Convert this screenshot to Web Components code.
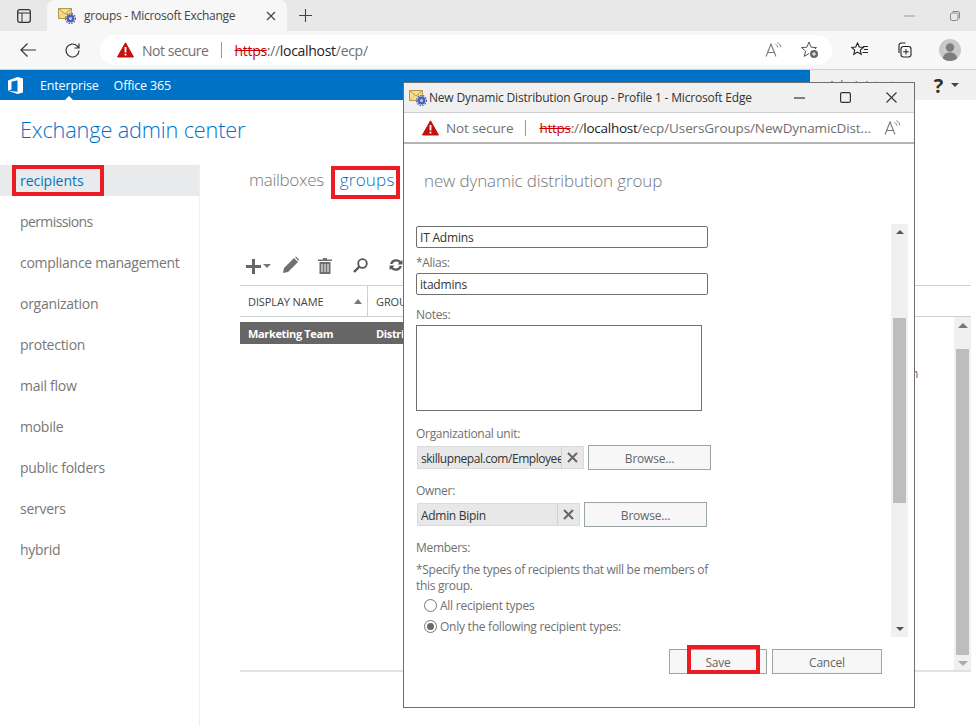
<!DOCTYPE html>
<html lang="en"><head><meta charset="utf-8"><title>groups - Microsoft Exchange</title>
<style>
html,body{margin:0;padding:0;background:#fff}
body{width:976px;height:726px;overflow:hidden;position:relative;font-family:"Open Sans","Noto Sans",sans-serif;color:#666}
</style></head><body>
<browser-bar></browser-bar>
<ex-topbar></ex-topbar>
<admin-page></admin-page>
<popup-window></popup-window>
<script>
const ICONS={
 mail:'<svg viewBox="0 0 18 17" width="18" height="17"><path d="M.5 1.500h13v10H.5z" fill="#f8dd8c" stroke="#b4964c"/><path d="M.5 1.500 7 7l6.500-5.500" fill="none" stroke="#b4964c"/><path d="M.5 11.500 5 6.500M13.500 11.500 9 6.500" fill="none" stroke="#d8bd70"/><circle cx="12.500" cy="11.500" r="4" fill="#4a5fc0"/><circle cx="12.500" cy="11.500" r="5" fill="none" stroke="#4a5fc0" stroke-width="1.200" stroke-dasharray="1.500 1.200"/><circle cx="12.500" cy="11.500" r="1.500" fill="#c5cff2"/></svg>',
 warn:'<svg viewBox="0 0 17 16" width="17" height="16"><path d="M8.500.8 16.500 15H.5z" fill="#c50f0f" stroke="#c50f0f" stroke-linejoin="round"/><path d="M7.600 5h1.800v5.500H7.600zM7.600 11.800h1.800v1.800H7.600z" fill="#fff"/></svg>',
 read:'<svg viewBox="0 0 17 16" width="17" height="16"><path d="M1 14.500 6 2l5 12.500M2.800 10.500h6.400" fill="none" stroke="#777" stroke-width="1.100"/><path d="M10.500 2.500c1.300.5 2 1.500 2.200 3M12.500.8c2 .8 3 2.300 3.200 4.400" fill="none" stroke="#777"/></svg>'
};
function def(name,css,html,init){
 customElements.define(name,class extends HTMLElement{
  constructor(){super();const r=this.attachShadow({mode:'open'});r.innerHTML='<style>'+css+'</style>'+html;if(init)init(this,r)}
 });
}

def('browser-bar',`
:host{display:block;height:70px;font-family:"Open Sans","Noto Sans",sans-serif}
.strip{height:31px;background:#e8e8e8;display:flex;align-items:stretch}
.side{width:47px;display:flex;align-items:center;justify-content:center}
.tab{width:240px;background:#f7f7f7;border-radius:8px 8px 0 0;display:flex;align-items:center;padding:0 11px 0 11px;box-sizing:border-box;font-size:12px;letter-spacing:-.27px;color:#444}
.tab span{flex:1;margin-left:8px;white-space:nowrap}
.plus{width:36px;display:flex;align-items:center;justify-content:center}
.ctrl{margin-left:auto;display:flex;align-items:center;gap:35px;padding-right:16px}
.tools{height:38px;background:#f7f7f7;border-bottom:1px solid #cfcfcf;display:flex;align-items:center;position:relative}
.nav{width:100px;display:flex;align-items:center;gap:27px;padding-left:19px;box-sizing:border-box}
.pill{width:732px;height:30px;background:#fff;border-radius:15px;display:flex;align-items:center;box-sizing:border-box;padding-left:17px;font-size:14px;letter-spacing:-.3px;white-space:nowrap}
.ns{margin-left:8px;color:#707070;letter-spacing:-.45px}
.sep{width:1px;height:16px;background:#999;margin:0 13px 0 12px}
.red{color:#c00;text-decoration:line-through}
.g{color:#707070}.d{color:#222}
.end{margin-left:auto;display:flex;gap:19px;align-items:center;padding-right:13px}
.right{display:flex;align-items:center;margin-left:19px;gap:29px}
.av{width:22px;height:22px;border-radius:50%;background:#c9c9c9;overflow:hidden;display:block;margin-left:-2px}
`,`
<div class="strip">
 <div class="side"><svg width="14" height="14" viewBox="0 0 14 14"><rect x=".7" y=".7" width="12.600" height="12.600" rx="2" fill="none" stroke="#333" stroke-width="1.300"/><path d="M.7 4h12.600M5 4v9" stroke="#333" fill="none"/></svg></div>
 <div class="tab">${ICONS.mail}<span>groups - Microsoft Exchange</span><svg width="10" height="10" viewBox="0 0 10 10"><path d="M1 1l8 8M9 1l-8 8" stroke="#444" stroke-width="1.200"/></svg></div>
 <div class="plus"><svg width="15" height="15" viewBox="0 0 15 15"><path d="M7.500 1v13M1 7.500h13" stroke="#444" stroke-width="1.100"/></svg></div>
 <div class="ctrl"><svg width="11" height="2" viewBox="0 0 11 2"><path d="M0 1h11" stroke="#9a9a9a"/></svg><svg width="10" height="10" viewBox="0 0 10 10"><rect x=".5" y="2" width="7.500" height="7.500" rx="1.500" fill="none" stroke="#8a8a8a"/><path d="M2.500.5h5.500a1.500 1.500 0 0 1 1.500 1.500v5.500" fill="none" stroke="#8a8a8a"/></svg></div>
</div>
<div class="tools">
 <div class="nav">
  <svg width="18" height="16" viewBox="0 0 18 16"><path d="M17 8H2M8.500 1.500 2 8l6.500 6.500" fill="none" stroke="#333" stroke-width="1.200"/></svg>
  <svg width="17" height="17" viewBox="0 0 17 17"><path d="M15 8.500a6.500 6.500 0 1 1-2-4.700L15 6M15 1.500V6h-4.500" fill="none" stroke="#333" stroke-width="1.200"/></svg>
 </div>
 <div class="pill">${ICONS.warn}<span class="ns">Not secure</span><span class="sep"></span><span><span class="red">https</span><span class="g">://</span><span class="d">localhost</span><span class="g">/ecp/</span></span>
  <div class="end">${ICONS.read}<svg width="18" height="18" viewBox="0 0 18 18"><path d="M8 1 10.100 6.200l5.400.4-4.100 3.500 1.300 5.300L8 12.500 3.300 15.400l1.300-5.300L.5 6.600l5.400-.4z" fill="none" stroke="#555" stroke-linejoin="round"/><circle cx="13" cy="13" r="5" fill="#fff"/><circle cx="13" cy="13" r="4" fill="#666"/><path d="M13 11v4M11 13h4" stroke="#fff"/></svg></div>
 </div>
 <div class="right">
  <svg width="18" height="16" viewBox="0 0 18 16"><path d="M6.500 1 8.300 5l4 .4-3 2.700.9 4.200-3.700-2.200L2.800 12.300l.9-4.200-3-2.700 4-.4z" fill="none" stroke="#222" stroke-width="1.100"/><path d="M12 4.500h5M13 7.500h4M11.500 10.500h5.500" stroke="#222"/></svg>
  <svg width="16" height="16" viewBox="0 0 16 16" style="margin-left:-2px"><path d="M3 11V3.500Q3 1 5.500 1h4" fill="none" stroke="#222" stroke-width="1.100"/><rect x="5" y="4.500" width="10" height="10.500" rx="2.500" fill="none" stroke="#222" stroke-width="1.100"/><path d="M10 7v5.500M7.200 9.800h5.600" stroke="#222"/></svg>
  <svg class="av" viewBox="0 0 22 22"><circle cx="11" cy="8.500" r="4.200" fill="#7d7d7d"/><path d="M3.500 22c0-6 3-8.500 7.500-8.500s7.500 2.500 7.500 8.500z" fill="#7d7d7d"/></svg>
 </div>
</div>`);

def('ex-topbar',`
:host{display:flex;height:30px;background:#0072c6;font-family:"Open Sans","Noto Sans",sans-serif;font-size:12.500px;color:#fff;letter-spacing:-.15px;white-space:nowrap}
.blue{width:810px;display:flex;align-items:center;box-sizing:border-box;padding-left:8px;position:relative}
.logo{display:block;margin-right:17px}
.t2{margin-left:15px}
.notch{position:absolute;left:65px;bottom:0;width:0;height:0;border:4px solid transparent;border-top:0;border-bottom-color:#fff}
.grey{flex:1;background:#f0f0f0;color:#666;display:flex;align-items:center;box-sizing:border-box;padding-left:18px}
.help{margin-left:27px;font-size:20px;font-weight:700;color:#333;letter-spacing:0}
.car{margin-left:8px;width:0;height:0;border:4px solid transparent;border-top-color:#444;border-bottom:0}
`,`
<div class="blue"><svg class="logo" width="15" height="17" viewBox="0 0 15 17"><path d="M0 3.500 9.500 0 15 1.500v14L9.500 17 0 13.700 9.500 14.800V3.300L3.500 4.800v7.700L0 13.700z" fill="#fff"/></svg><span>Enterprise</span><span class="t2">Office 365</span><i class="notch"></i></div>
<div class="grey"><span>Administrator</span><span class="help">?</span><i class="car"></i></div>`);

def('red-box',`:host{position:absolute;box-sizing:border-box;border:4px solid #ed1c24;pointer-events:none}`,'');

def('nav-item',`
:host{display:block;position:relative;height:31px;margin-bottom:10px;padding-left:20px;line-height:32px;font-size:14px;letter-spacing:-.27px;color:#777;box-sizing:border-box;white-space:nowrap}
:host([sel]){background:#e9eaeb;color:#0072c6;letter-spacing:-.05px}
`,`<slot></slot>`);

def('tool-bar',`
:host{display:flex;align-items:center;height:30px;padding:0 0 10px 6px;box-sizing:border-box}
svg{display:block}
.car{width:0;height:0;border:4px solid transparent;border-top-color:#777;border-bottom:0;margin:2px 0 0 2px}
`,`
<svg width="15" height="15" viewBox="0 0 15 15" style="margin-top:3px"><path d="M6 0h3v6h6v3H9v6H6V9H0V6h6z" fill="#666"/></svg><i class="car"></i>
<svg width="18" height="18" viewBox="0 0 18 18" style="margin-left:11px"><path d="M1 17l1-5L12 2l4 4L6 16zM13 1l1-.5 3 3-.5 1.500z" fill="#707070"/></svg>
<svg width="14" height="16" viewBox="0 0 14 16" style="margin-left:18px;margin-top:2px"><path d="M5 0h4v1.500h5V3H0V1.500h5zM1.500 4h11v12h-11z" fill="#707070"/><path d="M4 6v8M7 6v8M10 6v8" stroke="#fff"/></svg>
<svg width="15" height="15" viewBox="0 0 15 15" style="margin-left:21px"><circle cx="9.500" cy="5.500" r="4.300" fill="none" stroke="#555" stroke-width="1.800"/><path d="M6.500 8.500 1 14" stroke="#555" stroke-width="2.400"/></svg>
<svg width="16" height="16" viewBox="0 0 15 15" style="margin-left:20px"><path d="M2 6.500A5.800 5.800 0 0 1 12 4l1.500-1.500V7H9l1.500-1.500A3.700 3.700 0 0 0 4.200 6.500zM13 8.500A5.800 5.800 0 0 1 3 11l-1.500 1.500V8H6l-1.500 1.500a3.700 3.700 0 0 0 6.300-1z" fill="#555"/></svg>`);

def('admin-page',`
:host{display:block;font-family:"Open Sans","Noto Sans",sans-serif}
.title{height:65px;box-sizing:border-box;padding:16px 0 0 20px;font-size:21.700px;line-height:28px;color:#0072c6;letter-spacing:-.15px;font-weight:300;white-space:nowrap}
.cols{display:flex;height:561px}
.side{width:200px;border-right:1px solid #eef0f0;box-sizing:border-box;position:relative;height:561px}
.main{flex:1;margin:0 5px 0 40px;min-width:0}
.tabs{height:90px;display:flex;gap:16px;padding:3px 0 0 9px;box-sizing:border-box;font-size:17px;line-height:24px;letter-spacing:-.3px;color:#777;font-weight:300;white-space:nowrap;position:relative}
.tabs b{font-weight:300;color:#0072c6;letter-spacing:.2px}
.head{height:32px;box-sizing:border-box;border-top:1px solid #ccd1d1;border-bottom:1px solid #ccd1d1;display:flex;align-items:center;font-size:11px;letter-spacing:-.1px;color:#444;white-space:nowrap}
.h1{width:128px;height:100%;padding-left:8px;box-sizing:border-box;border-right:1px solid #ccd1d1;display:flex;align-items:center;justify-content:space-between;padding-right:5px}
.up{width:0;height:0;border:4px solid transparent;border-bottom:5px solid #777;border-top:0}
.h2{margin-left:8px}
.body{height:355px;display:flex;border-bottom:2px solid #dfe3e3;box-sizing:border-box}
.list{width:560px;padding-top:5px;box-sizing:border-box}
.row{height:22px;background:#666;color:#fff;font-size:11px;font-weight:700;letter-spacing:-.35px;display:flex;align-items:center;white-space:nowrap}
.row span:first-child{width:136px;padding-left:8px;box-sizing:border-box}
.detail{flex:1;display:flex;justify-content:space-between;min-width:0}
.txt{font-size:12px;color:#666;padding:48px 0 0 111px}
.sb{width:17px;background:#f0f0f0;display:flex;flex-direction:column;align-items:center;height:353px}
.ua{width:0;height:0;border:5px solid transparent;border-bottom:5px solid #777;border-top:0;margin:6px 0 0}
.th{width:13px;height:306px;background:#bdbdbd;margin-top:21px}
.da{width:0;height:0;border:5px solid transparent;border-top:5px solid #aaa;border-bottom:0;margin-top:6px}
`,`
<div class="title">Exchange admin center</div>
<div class="cols">
 <div class="side">
  <nav-item sel>recipients</nav-item><nav-item style="letter-spacing:-.6px">permissions</nav-item><nav-item>compliance management</nav-item><nav-item>organization</nav-item><nav-item>protection</nav-item><nav-item>mail flow</nav-item><nav-item>mobile</nav-item><nav-item>public folders</nav-item><nav-item>servers</nav-item><nav-item>hybrid</nav-item>
  <red-box style="left:12px;top:0;width:92px;height:31px"></red-box>
 </div>
 <div class="main">
  <div class="tabs"><span>mailboxes</span><b>groups</b><red-box style="left:91px;top:1px;width:69px;height:33px"></red-box></div>
  <tool-bar></tool-bar>
  <div class="head"><div class="h1"><span>DISPLAY NAME</span><i class="up"></i></div><div class="h2">GROU</div></div>
  <div class="body">
   <div class="list"><div class="row"><span>Marketing Team</span><span>Distri</span></div></div>
   <div class="detail"><div class="txt">n</div><div class="sb"><i class="ua"></i><i class="th"></i><i class="da"></i></div></div>
  </div>
 </div>
</div>`);

def('form-field',`
:host{display:block}
.l{display:block;font-size:12px;line-height:16px;color:#707070;letter-spacing:-.3px;white-space:nowrap}
`,`<span class="l"><slot></slot></span>`);

def('text-box',`
:host{display:block;box-sizing:border-box;width:292px;height:22px;border:1px solid #707070;border-radius:2px;padding:2px 0 0 3px;font-size:12px;line-height:18px;color:#333;letter-spacing:-.2px;background:#fff;white-space:nowrap}
`,`<slot></slot>`);

def('picker-row',`
:host{display:flex;align-items:center;height:25px;margin-left:1px;font-size:12px;letter-spacing:-.3px}
.box{height:23px;box-sizing:border-box;background:#e8e8e8;border:1px solid #dadcdc;display:flex;color:#333;align-items:center;overflow:hidden}
.v{flex:1;padding:2px 0 0 3px;white-space:nowrap;overflow:hidden;min-width:0}
.x{width:21px;height:100%;border-left:1px solid #cfd2d2;display:flex;align-items:center;justify-content:center;flex:none}
.b{margin-left:4px;width:123px;height:25px;box-sizing:border-box;border:1px solid #9aa5a5;background:#f7f7f7;color:#666;display:flex;align-items:center;justify-content:center;padding-top:1px;letter-spacing:-.2px}
`,`<div class="box"><div class="v"><slot></slot></div><div class="x"><svg width="11" height="11" viewBox="0 0 11 11"><path d="M1 1l9 9M10 1l-9 9" stroke="#666" stroke-width="2"/></svg></div></div><div class="b">Browse...</div>`);

def('radio-line',`
:host{display:flex;align-items:center;height:16px;padding-left:8px;font-size:12px;color:#707070;letter-spacing:-.25px;white-space:nowrap}
.r{width:13px;height:13px;border:1px solid #777;border-radius:50%;box-sizing:border-box;margin-right:3px;display:flex;align-items:center;justify-content:center;background:#fff;flex:none}
:host([on]) .r::after{content:"";width:7px;height:7px;border-radius:50%;background:#6a6a6a}
`,`<i class="r"></i><slot></slot>`);

def('popup-window',`
:host{position:absolute;left:403px;top:82px;width:512px;height:626px;box-sizing:border-box;border:1px solid #6f6f6f;background:#fff;font-family:"Open Sans","Noto Sans",sans-serif;display:flex;flex-direction:column}
.tb{height:30px;background:#f0f0f0;border-bottom:1px solid #cfcfcf;box-sizing:border-box;display:flex;align-items:center;padding-left:5px;font-size:12px;letter-spacing:-.2px;color:#333;white-space:nowrap;flex:none}
.tb span{margin-left:2px;flex:1}
.wc{display:flex;align-items:center;gap:35px;padding-right:17px}
.ab{height:31px;border-bottom:2px solid #b4b4b4;box-sizing:border-box;display:flex;align-items:center;padding-left:18px;font-size:13.500px;letter-spacing:-.27px;white-space:nowrap;flex:none;overflow:hidden}
.ns{margin-left:7px;color:#707070;letter-spacing:-.1px}
.sep{width:1px;height:16px;background:#999;margin:0 13px 0 12px;flex:none}
.red{color:#c00;text-decoration:line-through}.g{color:#707070}.d{color:#222}
.url{flex:none}
.url .w{letter-spacing:-.12px}
.ab svg{margin-left:13px;flex:none}
.ab svg:first-child{margin-left:0}
h1{margin:0;height:80px;box-sizing:border-box;padding:25px 0 0 20px;font-weight:300;font-size:17px;line-height:24px;letter-spacing:-.13px;color:#777;flex:none;white-space:nowrap}
.scroll{height:413px;display:flex;justify-content:space-between;flex:none;padding-left:12px;box-sizing:border-box;padding-right:6px}
.form{width:300px;padding-top:2px;box-sizing:border-box;overflow:hidden}
.ta{display:block;box-sizing:border-box;width:286px;height:86px;border:1px solid #707070;margin-top:2px}
.sb{width:17px;background:#f0f0f0;display:flex;flex-direction:column;align-items:center}
.ua{width:0;height:0;border:4px solid transparent;border-bottom:4px solid #555;border-top:0;margin-top:6px}
.th{width:13px;height:185px;background:#bdbdbd;margin-top:84px}
.da{width:0;height:0;border:4px solid transparent;border-top:4px solid #555;border-bottom:0;margin-top:auto;margin-bottom:6px}
.btns{flex:none;display:flex;justify-content:flex-end;gap:5px;margin-top:12px;padding-right:32px;font-size:12px;color:#666;position:relative}
.btn{height:25px;box-sizing:border-box;border:1px solid #9aa5a5;background:#f7f7f7;display:flex;align-items:center;justify-content:center;letter-spacing:-.2px;padding-top:2px}
`,`
<div class="tb">${ICONS.mail}<span>New Dynamic Distribution Group - Profile 1 - Microsoft Edge</span>
 <div class="wc"><svg width="11" height="2" viewBox="0 0 11 2"><path d="M0 1h11" stroke="#333" stroke-width="1.200"/></svg><svg width="11" height="11" viewBox="0 0 11 11"><rect x=".6" y=".6" width="9.800" height="9.800" rx="1.500" fill="none" stroke="#333" stroke-width="1.200"/></svg><svg width="11" height="11" viewBox="0 0 11 11"><path d="M.5.500l10 10M10.500.500l-10 10" stroke="#333" stroke-width="1.100"/></svg></div></div>
<div class="ab">${ICONS.warn}<span class="ns">Not secure</span><i class="sep"></i><span class="url"><span class="red">https</span><span class="g">://</span><span class="d">localhost</span><span class="g w">/ecp/UsersGroups/NewDynamicDist...</span></span>${ICONS.read}</div>
<h1>new dynamic distribution group</h1>
<div class="scroll">
 <div class="form">
  <text-box>IT Admins</text-box>
  <form-field style="margin-top:7px">*Alias:</form-field>
  <text-box style="margin-top:2px">itadmins</text-box>
  <form-field style="margin-top:12px">Notes:</form-field>
  <i class="ta"></i>
  <form-field style="margin-top:15px">Organizational unit:</form-field>
  <picker-row id="p1" style="margin-top:3px;letter-spacing:-.45px">skillupnepal.com/Employees</picker-row>
  <form-field style="margin-top:13px">Owner:</form-field>
  <picker-row id="p2" style="margin-top:3px">Admin Bipin</picker-row>
  <form-field style="margin-top:13px">Members:</form-field>
  <form-field style="margin-top:6px">*Specify the types of recipients that will be members of<br>this group.</form-field>
  <radio-line style="margin-top:3px">All recipient types</radio-line>
  <radio-line on style="margin-top:5px">Only the following recipient types:</radio-line>
 </div>
 <div class="sb"><i class="ua"></i><i class="th"></i><i class="da"></i></div>
</div>
<div class="btns"><div class="btn" style="width:98px">Save</div><div class="btn" style="width:110px">Cancel</div><red-box style="left:283px;top:-4px;width:73px;height:29px"></red-box></div>`,
(el,r)=>{
 r.getElementById('p1').shadowRoot.querySelector('.box').style.width='167px';
 r.getElementById('p2').shadowRoot.querySelector('.box').style.width='163px';
});
</script>
</body></html>
